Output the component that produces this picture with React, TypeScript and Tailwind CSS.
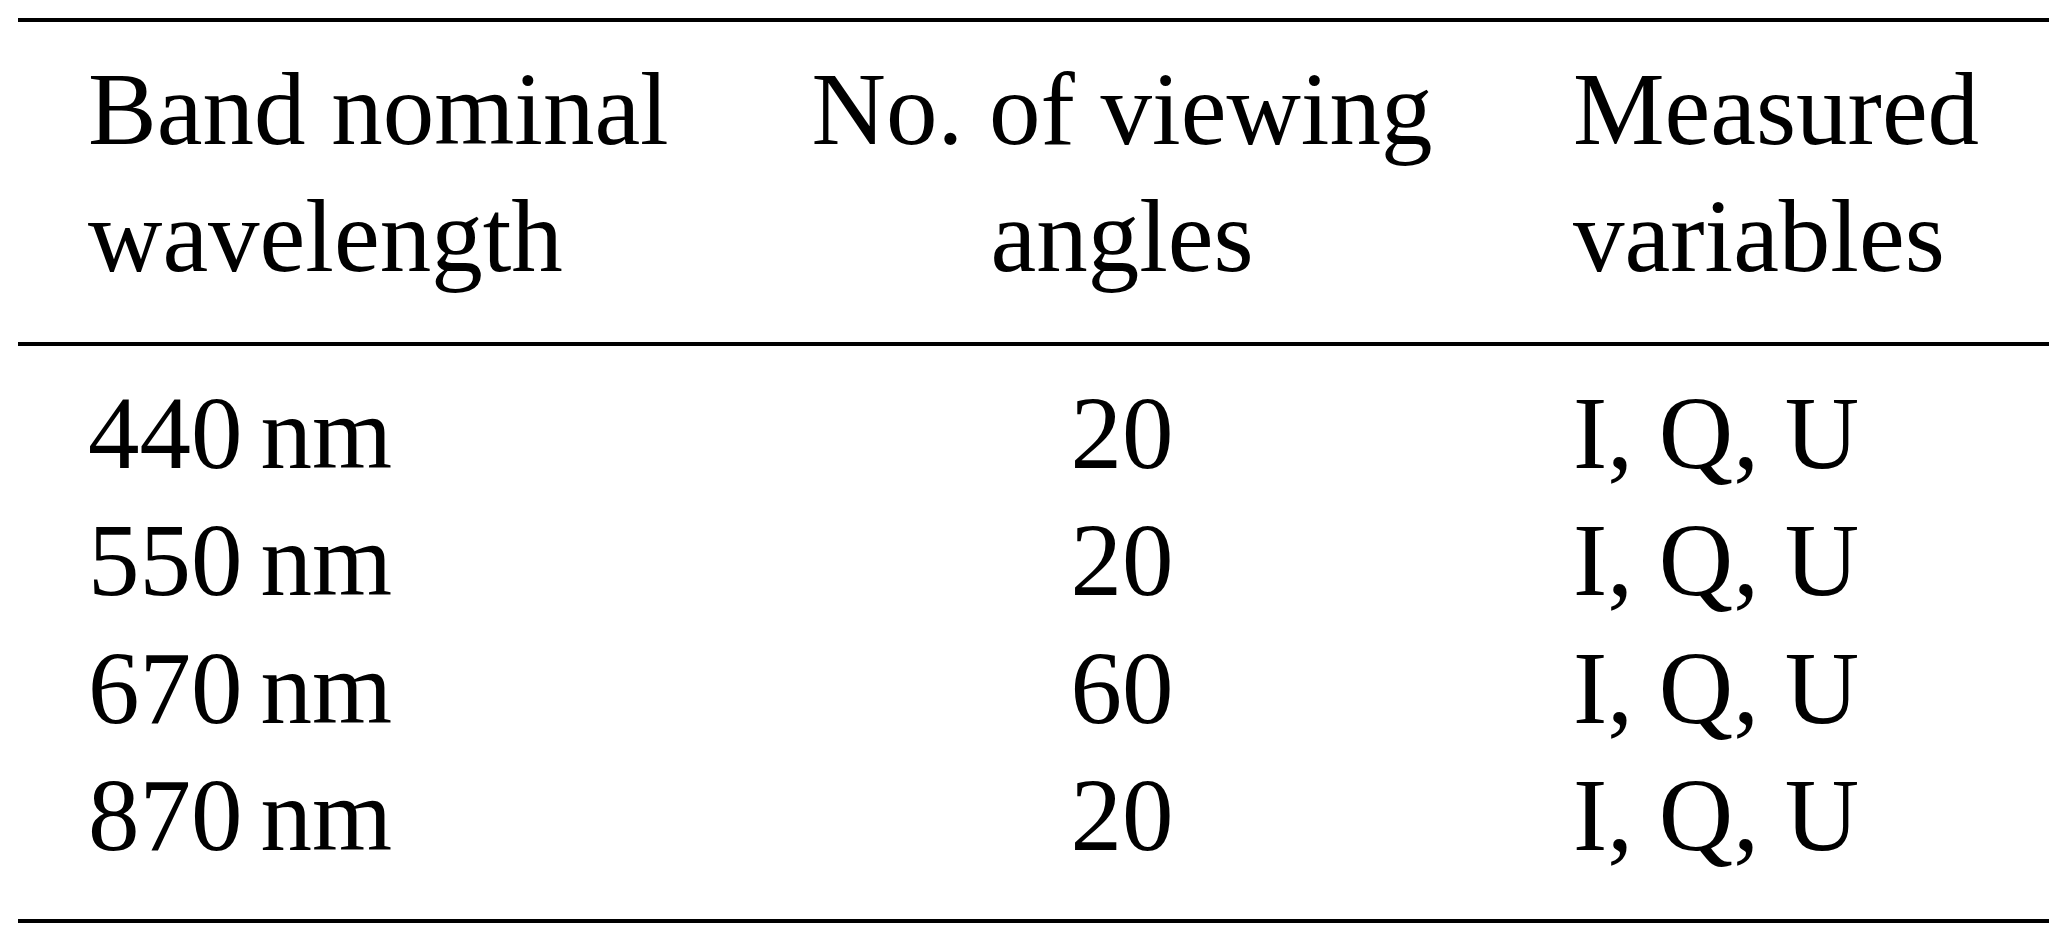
const rows = [
  { band: '440', angles: '20', vars: 'I, Q, U' },
  { band: '550', angles: '20', vars: 'I, Q, U' },
  { band: '670', angles: '60', vars: 'I, Q, U' },
  { band: '870', angles: '20', vars: 'I, Q, U' },
];

export default function App() {
  return (
    <div
      className="w-[2067px] h-[942px] bg-white text-black pt-[18px] pl-[18px]"
      style={{ fontFamily: '"Liberation Serif", "Times New Roman", serif' }}
    >
      <div className="w-[2031px] text-[103px] leading-[127px]">
        {/* top rule */}
        <div className="h-[4px] bg-black" />

        {/* header */}
        <div className="grid grid-cols-[682px_844px_1fr] pt-[24px] pb-[42px]">
          <div className="pl-[70px]">
            <div>Band nominal</div>
            <div>wavelength</div>
          </div>
          <div className="text-center">
            <div>No. of viewing</div>
            <div>angles</div>
          </div>
          <div className="pl-[29px]">
            <div>Measured</div>
            <div>variables</div>
          </div>
        </div>

        <div className="h-[4px] bg-black" />

        {/* body */}
        <div className="pt-[24px] pb-[40px]">
          {rows.map((r) => (
            <div key={r.band} className="grid grid-cols-[682px_844px_1fr] h-[127.3px]">
              <div className="pl-[70px] whitespace-nowrap">
                {r.band}
                <span className="pl-[18px]">nm</span>
              </div>
              <div className="text-center">{r.angles}</div>
              <div className="pl-[29px]">{r.vars}</div>
            </div>
          ))}
        </div>

        {/* bottom rule */}
        <div className="h-[4px] bg-black" />
      </div>
    </div>
  );
}
